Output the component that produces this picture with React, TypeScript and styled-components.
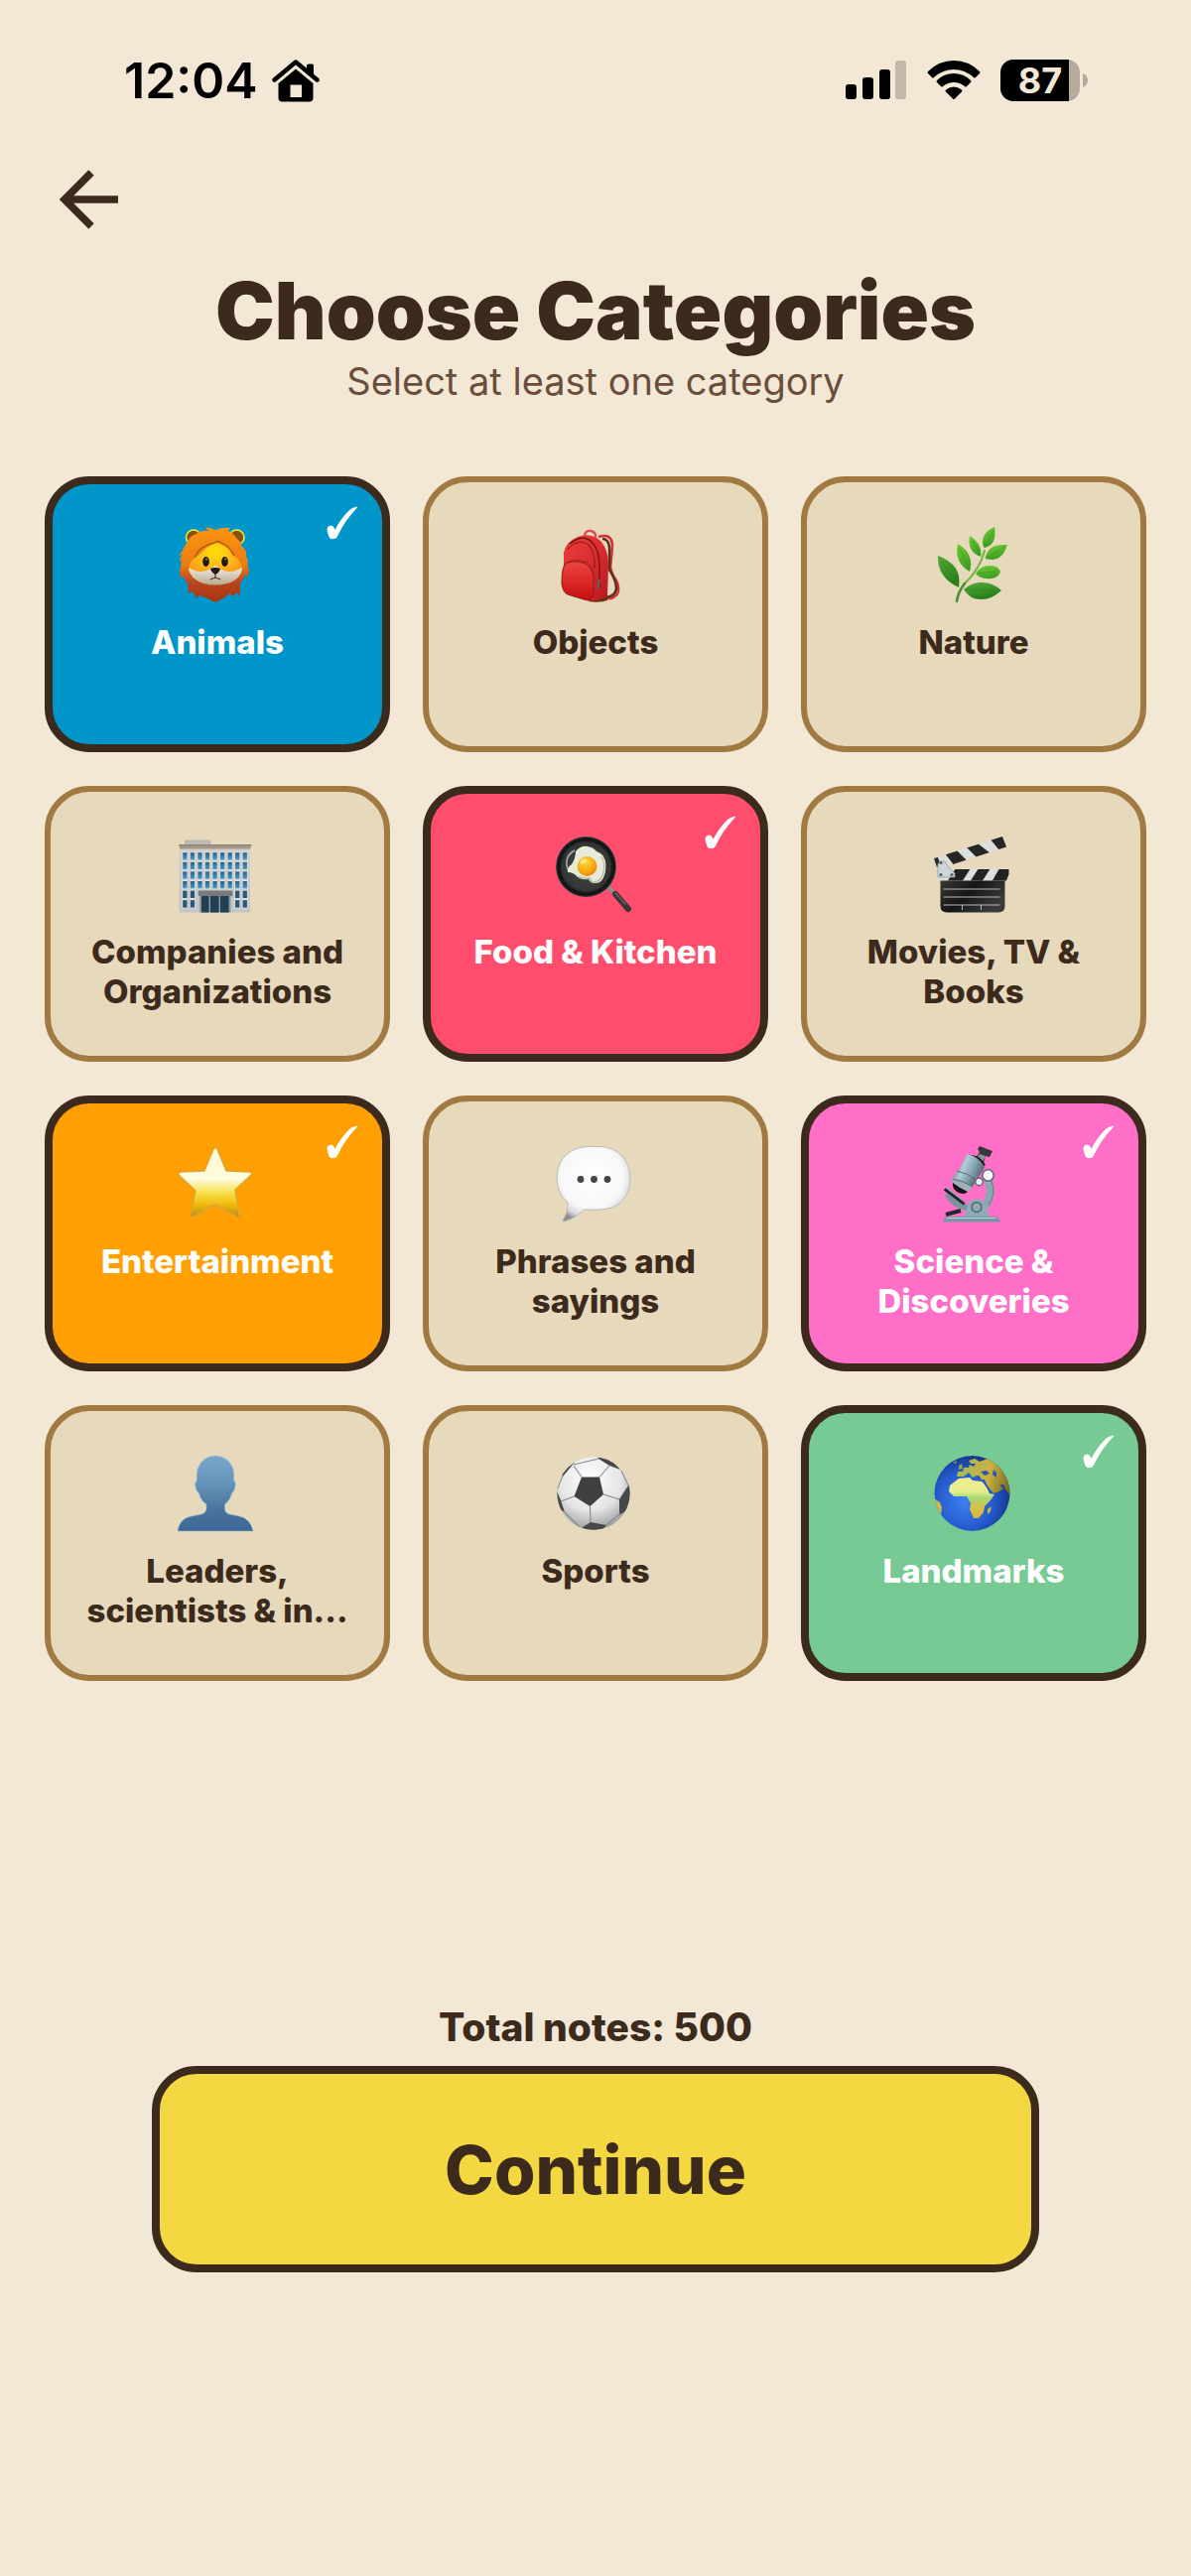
import React, { FC, ReactNode, useState } from 'react';
import styled, { createGlobalStyle } from 'styled-components';

const COLORS = {
	background: '#f3e8d6',
	surface: '#e7d9bb',
	border: '#a17a41',
	brown: '#3c2a1c',
	subtle: '#6b4d3c',
	yellow: '#f4d842',
	white: '#ffffff',
};

const LionIcon = () => (
	<Glyph viewBox="0 0 76 76" aria-hidden="true">
		<defs>
			<linearGradient id="mane" x1="0" y1="0" x2="0" y2="1">
				<stop offset="0" stopColor="#fb9410" />
				<stop offset="0.5" stopColor="#ee7d13" />
				<stop offset="0.72" stopColor="#b9481c" />
				<stop offset="1" stopColor="#a8330f" />
			</linearGradient>
			<radialGradient id="lionFace" cx="0.5" cy="0.2" r="0.75">
				<stop offset="0" stopColor="#ffdf0a" />
				<stop offset="0.5" stopColor="#ffb81a" />
				<stop offset="1" stopColor="#f58a1c" />
			</radialGradient>
			<linearGradient id="muzzle" x1="0" y1="0" x2="0" y2="1">
				<stop offset="0" stopColor="#f6efe0" />
				<stop offset="1" stopColor="#b9a890" />
			</linearGradient>
		</defs>
		<circle cx="16" cy="10.5" r="7.5" fill="#8a5010" stroke="#e8ee3a" strokeWidth="1.6" />
		<circle cx="59.5" cy="10.5" r="7.5" fill="#8a5010" stroke="#e8ee3a" strokeWidth="1.6" />
		<path
			fill="url(#mane)"
			d="M31 4 28 0Q34 1 38 3Q46 0 53 1L51 4Q56 6 59 11L64 16 64 19Q70 23 69 29L71 35 70 37Q73 44 71 50L68 48Q67 53 63 57L63 69 59 66 56 70 52 67Q49 71 46 72L38 76 30 72 22 69 19 72 15 65 11 67 10 57 5 49 3 52Q1 43 4 36L2 32 5 28 1 29Q5 25 6 21L10 15Q13 8 19 7Q24 3 31 4Z"
		/>
		<path
			fill="url(#lionFace)"
			d="M38 16Q29 20 22 28Q12 33 11 42Q12 51 25 56Q38 60 52 56Q64 50 65 42Q64 33 55 28Q50 19 44 18Q41 16 38 16Z"
		/>
		<path
			fill="url(#muzzle)"
			d="M11 41Q22 48 32 43L38 39 44 43Q54 48 65 41Q64 53 50 57Q38 60 26 57Q12 52 11 41Z"
		/>
		<path fill="none" stroke="#a85a09" strokeWidth="1.3" d="M17 31Q22 19 37 16Q41 13 44 16Q53 20 57 29" />
		<ellipse cx="28.5" cy="35" rx="3.3" ry="5" fill="#20180f" />
		<ellipse cx="47.5" cy="35" rx="3.3" ry="5" fill="#20180f" />
		<circle cx="29" cy="32.5" r="1" fill="#a08a5a" />
		<circle cx="48" cy="32.5" r="1" fill="#a08a5a" />
		<path fill="#1f1a18" d="M33 42Q38 40 43 42Q42 46 38 48Q34 46 33 42Z" />
		<path fill="none" stroke="#2a211b" strokeWidth="1.1" d="M38 47V52M33 53Q38 50 43 53" />
	</Glyph>
);

const BackpackIcon = () => (
	<Glyph viewBox="0 0 76 76" aria-hidden="true">
		<defs>
			<linearGradient id="bag" x1="0" y1="0" x2="1" y2="1">
				<stop offset="0" stopColor="#e8403a" />
				<stop offset="0.5" stopColor="#dc2d30" />
				<stop offset="1" stopColor="#b41820" />
			</linearGradient>
			<linearGradient id="pocket" x1="0" y1="0" x2="0" y2="1">
				<stop offset="0" stopColor="#ee4440" />
				<stop offset="1" stopColor="#c80f0d" />
			</linearGradient>
		</defs>
		<path fill="none" stroke="#d2303b" strokeWidth="2.6" d="M43 10Q56 6 57 18Q56 32 55 40Q56 48 61 54Q67 68 56 72L50 72" />
		<path fill="none" stroke="#64301c" strokeWidth="2.6" d="M47 12Q55 12 54 27L54 43Q61 54 61 62Q60 70 51 71" />
		<path fill="none" stroke="#e04b59" strokeWidth="2.4" d="M29 9Q30 3 35 4Q41 5 40 11" />
		<path
			fill="url(#bag)"
			d="M8 40V26Q10 15 22 10Q36 5 46 15Q53 24 53 38L52 70Q46 76 36 75L14 69Q7 66 6 55Z"
		/>
		<path fill="#6f3016" d="M34 74Q43 75 52 70V74Q45 77 32 75Z" />
		<path fill="none" stroke="#761413" strokeWidth="1.4" d="M14 17Q28 6 37 16Q44 24 44 40L44 62" />
		<path fill="none" stroke="#8e1417" strokeWidth="1" d="M12 22Q24 10 34 19Q40 27 39 42" />
		<path
			fill="url(#pocket)"
			stroke="#8e2019"
			strokeWidth="1"
			d="M9 38Q15 33 27 36Q37 40 38 50V68Q36 76 28 73L12 68Q7 66 6 57Q6 42 9 38Z"
		/>
		<path fill="none" stroke="#a0221c" strokeWidth="1" d="M8 38Q17 30 32 36Q38 41 38 49" />
		<path fill="#6e5b51" d="M42 54L45 52 44 61 41 64Z" />
	</Glyph>
);

const HerbIcon = () => (
	<Glyph viewBox="0 0 76 76" aria-hidden="true">
		<defs>
			<linearGradient id="leaf" x1="0.3" y1="0" x2="0.6" y2="1">
				<stop offset="0" stopColor="#6cc92f" />
				<stop offset="1" stopColor="#3c9c24" />
			</linearGradient>
			<linearGradient id="leafDark" x1="0" y1="0" x2="0.5" y2="1">
				<stop offset="0" stopColor="#56a93a" />
				<stop offset="1" stopColor="#277f1b" />
			</linearGradient>
		</defs>
		<path fill="none" stroke="#6fb53e" strokeWidth="2" strokeLinecap="round" d="M23 75Q24 66 31 57Q46 43 51 24" />
		<path fill="none" stroke="#4c8f35" strokeWidth="2.6" strokeLinecap="round" d="M23 75Q24 66 31 57" />
		<path fill="url(#leaf)" d="M61 0Q49 5 49 15Q49 20 51 21Q64 18 61 0Z" />
		<path fill="url(#leaf)" d="M74 18Q59 17 55 24Q51 30 52 32Q68 37 74 18Z" />
		<path fill="url(#leaf)" d="M36 9Q33 25 47 30Q49 17 36 9Z" />
		<path fill="url(#leaf)" d="M24 17Q20 36 36 45Q41 27 24 17Z" />
		<path fill="url(#leafDark)" d="M4 29Q3 51 25 61Q29 38 4 29Z" />
		<path fill="url(#leaf)" d="M42 47Q47 39 56 39Q65 39 67 45Q65 51 58 52Q46 53 42 47Z" />
		<path fill="url(#leafDark)" d="M30 63Q39 55 49 56Q59 56 68 64Q57 74 47 73Q36 73 30 63Z" />
		<path
			fill="none"
			stroke="#2f8a1d"
			strokeWidth="0.7"
			opacity="0.7"
			d="M60 4 51 20M71 20 54 31M38 13 46 28M26 22 36 43M7 34 24 58M62 45 44 47M63 64 32 63"
		/>
	</Glyph>
);

const WINDOW_COLUMNS = [0, 1, 2, 3, 4, 5, 6, 7, 8];
const WINDOW_ROWS = [0, 1, 2, 3, 4, 5];

const OfficeIcon = () => (
	<Glyph viewBox="0 0 76 76" aria-hidden="true">
		<defs>
			<linearGradient id="wall" x1="0" y1="0" x2="0" y2="1">
				<stop offset="0" stopColor="#d4d1cc" />
				<stop offset="1" stopColor="#c2c4c8" />
			</linearGradient>
			<linearGradient id="pane" x1="0" y1="0" x2="0" y2="1">
				<stop offset="0" stopColor="#27618c" />
				<stop offset="1" stopColor="#4d9cc0" />
			</linearGradient>
		</defs>
		<rect x="7" y="3.5" width="26.5" height="5" fill="#bdbab4" />
		<rect x="1.5" y="11" width="71.5" height="65.5" fill="url(#wall)" />
		<path fill="#a39588" d="M1 8H74.5L73 12.5H2.5Z" />
		<path fill="#8e8177" d="M1 8H74.5V9.2H1Z" />
		{WINDOW_ROWS.map((row) =>
			WINDOW_COLUMNS.filter((column) => row < 4 || column < 2 || column > 6).map((column) => (
				<g key={`${row}-${column}`}>
					<rect x={4.5 + column * 7.55} y={15.5 + row * 9.6} width="5.6" height="9" fill="#e4e6e7" />
					<rect
						x={5.2 + column * 7.55}
						y={16.2 + row * 9.6}
						width="4.3"
						height="7.4"
						fill={row > 3 ? '#2c5573' : 'url(#pane)'}
					/>
				</g>
			))
		)}
		<rect x="22" y="59" width="31.5" height="17.5" fill="#8f959b" />
		<rect x="20.8" y="54.5" width="34.6" height="5.5" fill="#77797c" />
		<path fill="#1f3f54" d="M24 60H31.5V76.5H24ZM33 60H41.5V76.5H33ZM43 60H51.5V76.5H43Z" />
	</Glyph>
);

const CookingIcon = () => (
	<Glyph viewBox="0 0 76 76" aria-hidden="true">
		<defs>
			<radialGradient id="pan" cx="0.5" cy="0.5" r="0.5">
				<stop offset="0" stopColor="#4a4c4b" />
				<stop offset="0.8" stopColor="#333534" />
				<stop offset="0.88" stopColor="#111212" />
				<stop offset="0.96" stopColor="#1b1c1c" />
				<stop offset="1" stopColor="#555" />
			</radialGradient>
			<radialGradient id="yolk" cx="0.4" cy="0.3" r="0.7">
				<stop offset="0" stopColor="#ffd84a" />
				<stop offset="0.6" stopColor="#f9b013" />
				<stop offset="1" stopColor="#e68a0a" />
			</radialGradient>
		</defs>
		<path stroke="#8f8f8f" strokeWidth="4" d="M53 51 60 58" />
		<path stroke="#3a3436" strokeWidth="6" strokeLinecap="round" d="M60 58 73 73" />
		<path stroke="#6d6668" strokeWidth="1.5" strokeLinecap="round" d="M60 57 70 68" />
		<circle cx="30.5" cy="30.5" r="30.5" fill="url(#pan)" />
		<path fill="none" stroke="#aeb2ac" strokeWidth="1.5" d="M12 33Q8 20 19 14" />
		<path
			fill="#e8ebd9"
			d="M20 15Q25 9 32 10Q38 11 41 15Q48 17 50 25Q51 33 49 39Q46 48 39 47Q35 47 33 43Q27 44 22 41Q18 36 12 36Q11 31 16 28Q20 22 20 15Z"
		/>
		<path fill="none" stroke="#b5bba2" strokeWidth="1.3" d="M46 20Q50 27 48 36Q46 45 39 46Q36 46 34 42Q28 43 23 40" />
		<circle cx="31.5" cy="30" r="10" fill="url(#yolk)" />
		<ellipse cx="28" cy="25" rx="3.5" ry="1.8" fill="#ffe98d" transform="rotate(-25 28 25)" />
	</Glyph>
);

const ClapperIcon = () => (
	<Glyph viewBox="0 0 76 76" aria-hidden="true">
		<defs>
			<clipPath id="clapTop">
				<path d="M0 22 69 0 73 10.5 10 31Z" />
			</clipPath>
			<clipPath id="clapBottom">
				<path d="M3 33H75.5V38L73 44.5H3Z" />
			</clipPath>
			<linearGradient id="slate" x1="0" y1="0" x2="1" y2="0.5">
				<stop offset="0" stopColor="#3a3a3a" />
				<stop offset="0.5" stopColor="#151515" />
				<stop offset="1" stopColor="#3b3b3b" />
			</linearGradient>
		</defs>
		<g clipPath="url(#clapTop)">
			<rect x="-2" y="-2" width="80" height="36" fill="#dcdedf" />
			<path fill="#262626" d="M11 17 22 13 34 25 21 30ZM33 11 44 7 57 17 44 22ZM57 3 69-1 76 11 66 14Z" />
		</g>
		<g clipPath="url(#clapBottom)">
			<rect x="2" y="32" width="75" height="14" fill="#dcdedf" />
			<path fill="#222" d="M22 32H37L28 46H13ZM45 32H57L48 46H36ZM66 32H80L74 46H58Z" />
		</g>
		<path fill="#2a2a2a" d="M0 22 4 21 6 27 3 31Z" />
		<path fill="#cfd4d7" stroke="#8d9295" strokeWidth="0.7" d="M6 25 11 25Q14 32 21 37V41H4V28Z" />
		<circle cx="7" cy="26.5" r="1.6" fill="#5a5e60" />
		<circle cx="7" cy="38.5" r="1.6" fill="#5a5e60" />
		<circle cx="18" cy="38.5" r="1.6" fill="#5a5e60" />
		<path fill="url(#slate)" d="M6.5 44.5H71.5V70Q71.5 76.5 65 76.5H13Q6.5 76.5 6.5 70Z" />
		<path fill="none" stroke="#b9b9b9" strokeWidth="1" d="M9.5 53H66.5M9.5 61H66.5M9.5 69H66.5M28.5 69V74M47.5 69V74" />
	</Glyph>
);

const StarIcon = () => (
	<Glyph viewBox="0 0 76 76" aria-hidden="true">
		<defs>
			<linearGradient id="starFill" x1="0" y1="0" x2="0" y2="1">
				<stop offset="0" stopColor="#fff8cf" />
				<stop offset="0.45" stopColor="#fffbe0" />
				<stop offset="0.66" stopColor="#f7de45" />
				<stop offset="0.82" stopColor="#efb90d" />
				<stop offset="1" stopColor="#bf8b10" />
			</linearGradient>
		</defs>
		<path
			fill="url(#starFill)"
			stroke="#dca634"
			strokeWidth="1.5"
			strokeLinejoin="round"
			d="M36 3Q38 0 40 3L49 25 73 26Q76 27 74 29L58 44 62.5 70Q62 73 59 71L38 59 16 71Q12 73 13 69L18 45 1 29Q0 27 3 26L27 25Z"
		/>
	</Glyph>
);

const BubbleIcon = () => (
	<Glyph viewBox="0 0 76 76" aria-hidden="true">
		<defs>
			<radialGradient id="bubble" cx="0.48" cy="0.4" r="0.62">
				<stop offset="0" stopColor="#ffffff" />
				<stop offset="0.7" stopColor="#f7f7f8" />
				<stop offset="0.88" stopColor="#d8d8db" />
				<stop offset="1" stopColor="#8f8f95" />
			</radialGradient>
		</defs>
		<path
			fill="url(#bubble)"
			stroke="#b4b1ae"
			strokeWidth="0.8"
			d="M32 0.5H45Q58 1 67 10Q75 19 75 33Q75 47 66 56Q58 64 43 64H28Q20 73 8 76Q6 76 8 73Q12 68 12 57Q1 47 1 32Q1 18 10 9Q19 1 32 0.5Z"
		/>
		<circle cx="25" cy="33.5" r="3.4" fill="#454545" />
		<circle cx="38.5" cy="33.5" r="3.4" fill="#454545" />
		<circle cx="52" cy="33.5" r="3.4" fill="#454545" />
	</Glyph>
);

const MicroscopeIcon = () => (
	<Glyph viewBox="0 0 76 76" aria-hidden="true">
		<defs>
			<linearGradient id="tube" x1="0" y1="0.2" x2="1" y2="0.6">
				<stop offset="0" stopColor="#6f8c99" />
				<stop offset="0.3" stopColor="#b4ccd5" />
				<stop offset="0.65" stopColor="#82a0ae" />
				<stop offset="1" stopColor="#50666f" />
			</linearGradient>
		</defs>
		<path fill="none" stroke="#8ba7b4" strokeWidth="8" d="M54 33Q60 46 53 58Q49 64 44 66" />
		<path fill="none" stroke="#5f7c89" strokeWidth="1" d="M58 35Q63 48 55 60" />
		<path fill="#33383b" d="M46 0 59 5 56 11 52 10 50 17 42 12 46 6 44 3Z" />
		<path fill="#87959b" d="M46 8 52 10 49 16 43 12Z" />
		<path fill="#15191b" d="M33 9Q45 7 52 19L48 21Z" />
		<path fill="url(#tube)" d="M33 8Q45 10 51 21L44 33 24 26Z" />
		<path fill="url(#tube)" d="M23 25Q34 28 43 34L38 42 18 34Z" />
		<path fill="#9eb0b5" d="M19 32Q30 34 39 41L35 46Q24 43 17 36Z" />
		<path fill="none" stroke="#465963" strokeWidth="0.8" d="M23 25Q34 27 43 34M19 33Q30 35 39 41" />
		<path fill="#141414" d="M19 37Q27 43 34 46Q30 50 23 46Q18 42 19 37Z" />
		<path stroke="#7695a3" strokeWidth="6" d="M13 48Q20 60 34 62" fill="none" />
		<path stroke="#1e2427" strokeWidth="4" d="M11 43 31 58" />
		<path stroke="#9cb5bf" strokeWidth="1.2" d="M11 41 32 57" />
		<circle cx="54.5" cy="29.5" r="5.7" fill="#f6f9fa" stroke="#596a75" strokeWidth="1.6" />
		<circle cx="45.5" cy="36" r="3.7" fill="#f6f9fa" stroke="#596a75" strokeWidth="1.4" />
		<path fill="#8fabb7" d="M30 72 34 59Q38 53 44 53Q51 55 53 62L56 72Z" />
		<circle cx="43" cy="61.5" r="5" fill="#94a6ad" stroke="#4e6670" strokeWidth="1.4" />
		<path stroke="#23282b" strokeWidth="4" d="M12 69 27 65" />
		<path fill="#7897a5" d="M13 71H62Q66 72 67 76.5H9Q9 73 13 71Z" />
		<path stroke="#bdd4dc" strokeWidth="1.2" d="M13 72.5H62" />
	</Glyph>
);

const PersonIcon = () => (
	<Glyph viewBox="0 0 76 76" aria-hidden="true">
		<defs>
			<linearGradient id="bust" x1="0" y1="0" x2="0" y2="1">
				<stop offset="0" stopColor="#79a7cc" />
				<stop offset="0.4" stopColor="#6390b7" />
				<stop offset="0.75" stopColor="#48719b" />
				<stop offset="1" stopColor="#3d6796" />
			</linearGradient>
		</defs>
		<path
			fill="url(#bust)"
			stroke="#8ab8d2"
			strokeWidth="0.6"
			d="M38 0Q52 1 56 14Q57 20 56.5 25Q59 26 58 31Q57 36 54.5 38Q53 45 47.5 49V54Q48 58 52 59L62 61Q73 63 76 76H0Q2 63 14 61L24 59Q28 58 29 54V49Q23 45 21.5 38Q19 36 18 31Q17 26 19.5 25Q19 20 20 14Q24 1 38 0Z"
		/>
	</Glyph>
);

const SoccerIcon = () => (
	<Glyph viewBox="0 0 76 76" aria-hidden="true">
		<defs>
			<radialGradient id="ball" cx="0.45" cy="0.3" r="0.72">
				<stop offset="0" stopColor="#ffffff" />
				<stop offset="0.6" stopColor="#e5e5e6" />
				<stop offset="1" stopColor="#9b9b9e" />
			</radialGradient>
			<clipPath id="ballClip">
				<circle cx="38" cy="38" r="36.7" />
			</clipPath>
		</defs>
		<circle cx="38" cy="38" r="36.7" fill="url(#ball)" />
		<g clipPath="url(#ballClip)">
			<path fill="#3f4042" d="M26 21.5 44 21.5 48 39 34.5 51 18.5 41Z" />
			<path
				fill="#47484a"
				d="M6 18 12 10 22 3 17 9 7 21ZM42 0 56 4 65 14 54 10 43 3ZM0 33 5 45 9 57 1 52ZM76 27 71 33 64 44V60L76 52ZM24 74 35 67 51 70 44 78H30Z"
			/>
			<path
				fill="none"
				stroke="#88898b"
				strokeWidth="1.1"
				d="M26 21.5 18 10M44 21.5 54 10M48 39 64 44M34.5 51 35 67M18.5 41 5 46M9 57 25 73M51 70 65 58M66 15 73 30M18 9 43 3M7 20 1 35"
			/>
		</g>
	</Glyph>
);

const GlobeIcon = () => (
	<Glyph viewBox="0 0 76 76" aria-hidden="true">
		<defs>
			<radialGradient id="ocean" cx="0.4" cy="0.6" r="0.65">
				<stop offset="0" stopColor="#3d80ef" />
				<stop offset="0.6" stopColor="#2459cc" />
				<stop offset="1" stopColor="#142f80" />
			</radialGradient>
			<linearGradient id="africa" x1="0" y1="0" x2="0" y2="1">
				<stop offset="0" stopColor="#f3ef8a" />
				<stop offset="0.35" stopColor="#e4ee8c" />
				<stop offset="0.5" stopColor="#a3d873" />
				<stop offset="0.7" stopColor="#d2c44e" />
				<stop offset="1" stopColor="#d6b43f" />
			</linearGradient>
			<linearGradient id="eurasia" x1="0" y1="0.3" x2="1" y2="0.5">
				<stop offset="0" stopColor="#a7bb55" />
				<stop offset="0.6" stopColor="#c9b142" />
				<stop offset="1" stopColor="#7c7126" />
			</linearGradient>
			<clipPath id="globeClip">
				<circle cx="38.5" cy="38" r="38" />
			</clipPath>
		</defs>
		<circle cx="38.5" cy="38" r="38" fill="url(#ocean)" />
		<g clipPath="url(#globeClip)">
			<path
				fill="url(#eurasia)"
				d="M35 5 41 3 46 6 54 3Q68 9 75 24L77 40 72 34 70 29 66 30 70 33 66 36 60 38 54 31 51 24 46 24 43 20 39 22 35 17 30 21 23 21 24 16 29 16 30 12 35 12 36 9 40 11 42 8 37 8Z"
			/>
			<path fill="#89a843" d="M25 10 28 8 29 13 25 14ZM19 7 23 5 22 8Z" />
			<path fill="#2a55b8" d="M47 16 53 15 56 18 51 20ZM60 14 63 17 63 22 59 19ZM43 20 45 20 48 24 46 25Z" />
			<path
				fill="url(#africa)"
				d="M25 23 36 22 39 25 48 26 52 29 56 38 61 39 57 45 51 51 50 57 45 63 40 63 36 54 37 48 33 41 20 41 15 36 16 30Z"
			/>
			<path fill="none" stroke="#2559bd" strokeWidth="1.8" d="M50 26 58 38" />
			<path fill="#d3b64b" d="M54 54 58 51 57 56 54 59ZM0 43 6 47 8 52 7 60 2 57Z" />
		</g>
	</Glyph>
);

type Category = {
	id: string;
	label: string;
	color: string;
	icon: ReactNode;
};

const CATEGORIES: Category[] = [
	{ id: 'animals', label: 'Animals', color: '#0096ca', icon: <LionIcon /> },
	{ id: 'objects', label: 'Objects', color: '#9b5de5', icon: <BackpackIcon /> },
	{ id: 'nature', label: 'Nature', color: '#4caf50', icon: <HerbIcon /> },
	{ id: 'companies', label: 'Companies and Organizations', color: '#5c7cfa', icon: <OfficeIcon /> },
	{ id: 'food', label: 'Food & Kitchen', color: '#ff4d6d', icon: <CookingIcon /> },
	{ id: 'movies', label: 'Movies, TV & Books', color: '#845ec2', icon: <ClapperIcon /> },
	{ id: 'entertainment', label: 'Entertainment', color: '#ff9f02', icon: <StarIcon /> },
	{ id: 'phrases', label: 'Phrases and sayings', color: '#00a896', icon: <BubbleIcon /> },
	{ id: 'science', label: 'Science & Discoveries', color: '#ff6ec7', icon: <MicroscopeIcon /> },
	{ id: 'leaders', label: 'Leaders, scientists & in...', color: '#3d6796', icon: <PersonIcon /> },
	{ id: 'sports', label: 'Sports', color: '#e76f51', icon: <SoccerIcon /> },
	{ id: 'landmarks', label: 'Landmarks', color: '#78ca95', icon: <GlobeIcon /> },
];

const StatusBar: FC = () => (
	<StatusRow>
		<StatusGroup>
			<Time>12:04</Time>
			<svg width="48" height="43" viewBox="0 0 48 43" aria-hidden="true">
				<path
					fill="none"
					stroke="#000"
					strokeWidth="4.5"
					strokeLinecap="round"
					strokeLinejoin="round"
					d="M2.5 20.5 24 2.5 45.5 20.5"
				/>
				<path d="M35 6Q35 4.5 37 4.5H40.5Q42 4.5 42 6V17L35 11Z" />
				<path
					fillRule="evenodd"
					d="M24 9.5 41.5 24V38.5Q41.5 42.5 37.5 42.5H10.500Q6.5 42.5 6.5 38.5V24ZM18.500 25.5V38H30V25.5Z"
				/>
			</svg>
		</StatusGroup>
		<StatusGroup>
			<svg width="62" height="40" viewBox="0 0 62 40" aria-hidden="true">
				<rect x="0" y="24" width="11" height="15" rx="3" />
				<rect x="17" y="17" width="11" height="22" rx="3" />
				<rect x="34" y="9" width="11" height="30" rx="3" />
				<rect x="50" y="0" width="11" height="39" rx="3" fill="#c4b9a9" />
			</svg>
			<Wifi width="54" height="40" viewBox="0 0 54 40" aria-hidden="true">
				<path d="M27 0Q42 0 53 11Q54 12 53 13L49 17Q48 18 47 17Q38 9 27 9Q16 9 7 17Q6 18 5 17L1 13Q0 12 1 11Q12 0 27 0Z" />
				<path d="M27 13Q37 13 44 20Q45 21 44 22L40 26Q39 27 38 26Q33 22 27 22Q21 22 16 26Q15 27 14 26L10 22Q9 21 10 20Q17 13 27 13Z" />
				<path d="M27 26.5Q31 26.5 35 29.5Q36 30.5 35 31.5L28 38.5Q27 39.5 26 38.5L19 31.5Q18 30.5 19 29.5Q23 26.5 27 26.5Z" />
			</Wifi>
			<Battery>
				<BatteryBody>87</BatteryBody>
				<svg width="5" height="14" viewBox="0 0 5 14" aria-hidden="true">
					<path fill="#b5aa9b" d="M0 0Q5 2 5 7Q5 12 0 14Z" />
				</svg>
			</Battery>
		</StatusGroup>
	</StatusRow>
);

const App: FC = () => {
	const [selected, setSelected] = useState<string[]>([
		'animals',
		'food',
		'entertainment',
		'science',
		'landmarks',
	]);

	const toggle = (id: string) =>
		setSelected((current) =>
			current.includes(id) ? current.filter((item) => item !== id) : [...current, id]
		);

	return (
		<Page>
			<GlobalStyle />
			<StatusBar />
			<BackButton type="button" aria-label="Back">
				<svg width="60" height="60" viewBox="0 0 60 60" aria-hidden="true">
					<path fill="none" stroke={COLORS.brown} strokeWidth="7.5" d="M59 30H8M32 3 5 30 32 57" />
				</svg>
			</BackButton>
			<Heading>
				<Title>Choose Categories</Title>
				<Subtitle>Select at least one category</Subtitle>
			</Heading>
			<Grid>
				{CATEGORIES.map(({ id, label, color, icon }) => {
					const isSelected = selected.includes(id);
					return (
						<Card
							key={id}
							type="button"
							aria-pressed={isSelected}
							$selected={isSelected}
							$color={color}
							onClick={() => toggle(id)}
						>
							{icon}
							<CardLabel>{label}</CardLabel>
							{isSelected && (
								<CheckMark viewBox="0 0 32 34" aria-hidden="true">
									<path d="M31 0.5Q26 1 23 4Q14 13 8.5 24Q7.5 20 4.5 19.5Q1 20 0.5 23Q0.5 26 3 32Q4.5 33.5 7 33Q10 33 11 30.5Q18 15 31 1.5Z" />
								</CheckMark>
							)}
						</Card>
					);
				})}
			</Grid>
			<Footer>
				<Total>Total notes: 500</Total>
				<ContinueButton type="button" disabled={!selected.length}>
					Continue
				</ContinueButton>
			</Footer>
		</Page>
	);
};

const GlobalStyle = createGlobalStyle`
	*, *::before, *::after {
		box-sizing: border-box;
	}
	body {
		margin: 0;
		background: ${COLORS.background};
	}
	button {
		font-family: inherit;
		cursor: pointer;
	}
`;

const Page = styled.main`
	display: flex;
	flex-direction: column;
	min-height: 100vh;
	padding: 56px 45px 306px;
	background: ${COLORS.background};
	color: ${COLORS.brown};
	font-family: Inter, 'Liberation Sans', sans-serif;
`;

const StatusRow = styled.div`
	display: flex;
	align-items: center;
	justify-content: space-between;
	height: 50px;
	padding: 0 59px 0 80px;
	color: #000;
`;

const StatusGroup = styled.div`
	display: flex;
	align-items: center;
	gap: 14px;
`;

const Time = styled.span`
	font-size: 50px;
	line-height: 50px;
	font-weight: 600;
`;

const Wifi = styled.svg`
	margin: 0 6px;
`;

const Battery = styled.div`
	display: flex;
	align-items: center;
	gap: 3px;
`;

const BatteryBody = styled.span`
	width: 80px;
	height: 42px;
	border-radius: 13px;
	background: linear-gradient(to right, #000 69px, #b5aa9b 69px);
	color: ${COLORS.background};
	font-size: 36px;
	line-height: 42px;
	font-weight: 700;
	text-align: center;
`;

const BackButton = styled.button`
	display: flex;
	align-self: flex-start;
	margin: 65px 0 0 15px;
	padding: 0;
	border: none;
	background: none;
`;

const Heading = styled.header`
	margin-top: 36px;
	text-align: center;
`;

const Title = styled.h1`
	margin: 0;
	font-size: 80px;
	line-height: 92px;
	font-weight: 900;
`;

const Subtitle = styled.p`
	margin: 0;
	color: ${COLORS.subtle};
	font-size: 38px;
	line-height: 50px;
`;

const Grid = styled.section`
	display: grid;
	grid-template-columns: repeat(3, minmax(0, 1fr));
	gap: 34px 33px;
	margin-top: 71px;
`;

const Card = styled.button<{ $selected: boolean; $color: string }>`
	position: relative;
	display: flex;
	flex-direction: column;
	align-items: center;
	justify-content: flex-start;
	gap: 20px;
	min-height: 278px;
	padding: ${(props) => (props.$selected ? '43px 16px 24px' : '45px 18px 26px')};
	border: ${(props) =>
		props.$selected ? `8px solid ${COLORS.brown}` : `6px solid ${COLORS.border}`};
	border-radius: 45px;
	background: ${(props) => (props.$selected ? props.$color : COLORS.surface)};
	color: ${(props) => (props.$selected ? COLORS.white : COLORS.brown)};
`;

const Glyph = styled.svg`
	flex: none;
	width: 76px;
	height: 76px;
	margin-right: 4px;
	overflow: visible;
`;

const CardLabel = styled.span`
	font-size: 33px;
	line-height: 40px;
	font-weight: 800;
`;

const CheckMark = styled.svg`
	position: absolute;
	top: 22px;
	right: 24px;
	width: 32px;
	height: 34px;
	fill: ${COLORS.white};
`;

const Footer = styled.footer`
	display: flex;
	flex-direction: column;
	gap: 14px;
	margin-top: auto;
	padding: 0 108px;
`;

const Total = styled.p`
	margin: 0;
	font-size: 39px;
	line-height: 50px;
	font-weight: 800;
	text-align: center;
`;

const ContinueButton = styled.button`
	height: 208px;
	border: 8px solid ${COLORS.brown};
	border-radius: 45px;
	background: ${COLORS.yellow};
	color: ${COLORS.brown};
	font-size: 67px;
	font-weight: 800;
`;

export default App;
